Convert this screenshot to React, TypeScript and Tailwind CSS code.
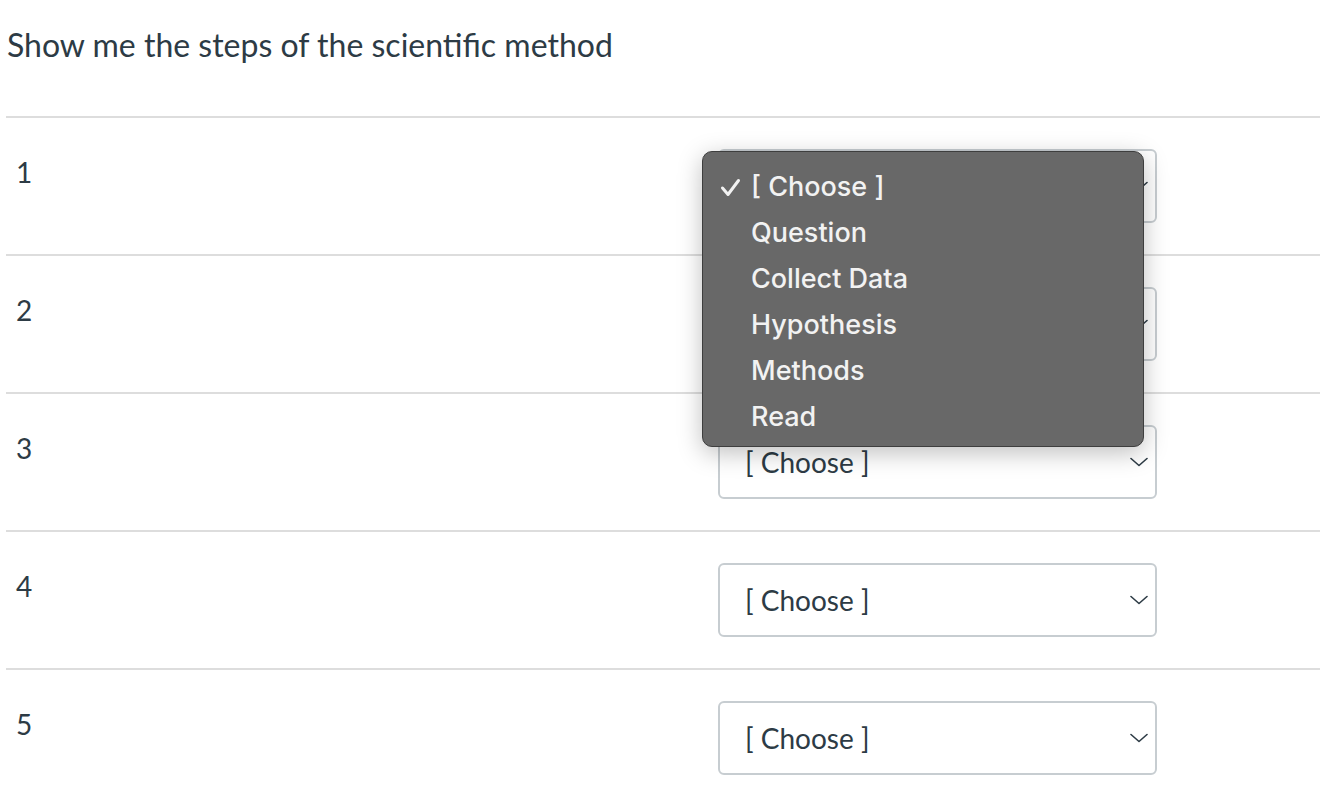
import React from "react";

const Chevron = () => (
  <svg width="18" height="10" viewBox="0 0 18 10" fill="none" className="shrink-0">
    <path d="M1 1.5 L9 8.5 L17 1.5" stroke="#2d3b45" strokeWidth="1.6" strokeLinecap="round" strokeLinejoin="round" />
  </svg>
);

const Select = () => (
  <div className="w-[439px] h-[74px] border-2 border-[#c7cdd1] rounded-[6px] bg-white flex items-center justify-between pl-[25px] pr-[7px]">
    <span className="text-[28px] text-[#2d3b45] leading-none">[ Choose ]</span>
    <Chevron />
  </div>
);

const items = ["[ Choose ]", "Question", "Collect Data", "Hypothesis", "Methods", "Read"];

export default function App() {
  return (
    <div className="w-[1320px] h-[806px] bg-white overflow-hidden" style={{ fontFamily: "Lato, 'Noto Sans', sans-serif" }}>
      <div className="pl-[6px]">
        <h1 className="pt-[24px] pb-[50px] pl-[1px] text-[32px] leading-[42px] text-[#2d3b45] font-normal">
          Show me the steps of the scientific method
        </h1>
        <div className="relative">
          {[1, 2, 3, 4, 5].map((n) => (
            <div key={n} className="border-t-2 border-[#dddddd] h-[138px] flex items-start">
              <div className="w-[712px] pl-[10px] pt-[33px] text-[28px] leading-[42px] text-[#2d3b45]">{n}</div>
              <div className="pt-[31px]">
                <Select />
              </div>
            </div>
          ))}
          <div
            className="absolute left-[696px] top-[35px] w-[442px] h-[296px] rounded-[10px] bg-[#686868] border border-[#3e3e3e] shadow-[0_6px_24px_rgba(0,0,0,0.25)] pt-[12px] pb-[8px]"
            style={{ fontFamily: "Inter, 'Noto Sans', sans-serif" }}
          >
            {items.map((it, i) => (
              <div key={it} className="h-[46px] flex items-center text-[27px] text-[#f2f2f2] font-medium">
                <span className="w-[48px] flex justify-end pr-[10px]">
                  {i === 0 && (
                    <svg width="21" height="19" viewBox="0 0 21 19" fill="none">
                      <path d="M2.5 10 L8 16.5 L18.5 2.5" stroke="#f2f2f2" strokeWidth="3" strokeLinecap="round" strokeLinejoin="round" />
                    </svg>
                  )}
                </span>
                <span>{it}</span>
              </div>
            ))}
          </div>
        </div>
      </div>
    </div>
  );
}
